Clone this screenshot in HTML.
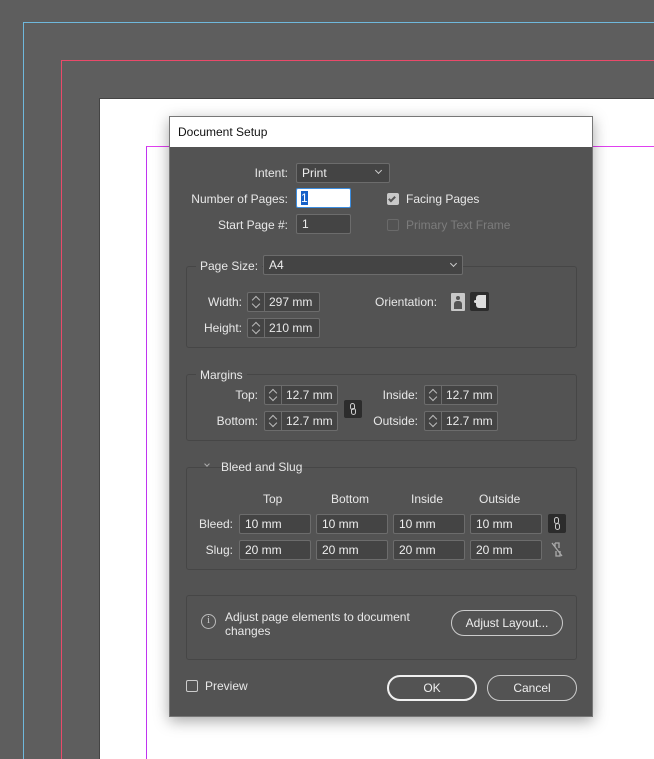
<!DOCTYPE html>
<html style="width:654px;height:759px;overflow:hidden"><head><style>
*{box-sizing:border-box;margin:0;padding:0}
body{width:654px;height:759px;background:#5e5e5e;position:relative;overflow:hidden;font-family:"Liberation Sans",sans-serif;font-size:12px;color:#e8e8e8}
.a{position:absolute}
.lbl{position:absolute;white-space:nowrap;line-height:14px}
.r{text-align:right}
.fld{position:absolute;background:#444;border:1px solid #6c6c6c;border-radius:2px;height:20px;line-height:18px;padding-left:5px;white-space:nowrap;overflow:hidden;color:#eee}
.grp{position:absolute;border:1px solid #464646;border-radius:3px}
.gl{position:absolute;background:#535353;padding:0 4px;line-height:14px}
.sp{position:absolute;height:20px;border:1px solid #6c6c6c;border-radius:2px;background:#444;display:flex}
.sp .ar{width:17px;border-right:1px solid #6c6c6c;position:relative}
.sp .ar:before,.sp .ar:after{content:"";position:absolute;left:5px;width:5px;height:5px;border-left:1px solid #bbb;border-top:1px solid #bbb}
.sp .ar:before{top:4px;transform:rotate(45deg)}
.sp .ar:after{top:8px;transform:rotate(225deg)}
.sp .v{padding-left:4px;line-height:18px;white-space:nowrap;overflow:hidden;flex:1}
.chev{position:absolute;width:6px;height:6px;border-right:1px solid #ccc;border-bottom:1px solid #ccc;transform:rotate(45deg)}
.btn{position:absolute;border:1px solid #ccc;border-radius:13px;text-align:center;color:#eee}
</style></head><body>
<div class="a" style="left:23px;top:22px;width:631px;height:737px;border-left:1px solid #6fb8dc;border-top:1px solid #6fb8dc"></div>
<div class="a" style="left:61px;top:60px;width:593px;height:699px;border-left:1px solid #ea4a6a;border-top:1px solid #ea4a6a"></div>
<div class="a" style="left:99px;top:98px;width:555px;height:661px;background:#fff;border-left:1px solid #444;border-top:1px solid #444"></div>
<div class="a" style="left:146px;top:146px;width:508px;height:613px;border-left:1px solid #c033f0;border-top:1px solid #e040f0"></div>

<div class="a" style="left:169px;top:116px;width:424px;height:601px;background:#535353;border:1px solid #777;box-shadow:0 4px 14px rgba(0,0,0,.35)">
</div>
<div class="a" style="left:170px;top:117px;width:422px;height:30px;background:#fff;color:#111;line-height:30px;padding-left:8px;font-size:12px">Document Setup</div>

<div class="lbl r" style="left:200px;top:166px;width:88px">Intent:</div>
<div class="fld" style="left:296px;top:163px;width:94px">Print</div>
<div class="chev" style="left:376px;top:168px;width:5px;height:5px"></div>
<div class="lbl r" style="left:170px;top:192px;width:118px">Number of Pages:</div>
<div class="fld" style="left:296px;top:188px;width:55px;background:#fff;border:1px solid #3d8ee0;color:#000;padding-left:4px"><span style="background:#1660c8;color:#fff">1</span></div>
<div class="lbl r" style="left:170px;top:218px;width:118px">Start Page #:</div>
<div class="fld" style="left:296px;top:214px;width:55px">1</div>
<div class="a" style="left:387px;top:193px;width:12px;height:12px;background:#c8c8c8;border-radius:2px"></div>
<div class="a" style="left:390px;top:195px;width:4px;height:7px;border-right:2px solid #555;border-bottom:2px solid #555;transform:rotate(45deg)"></div>
<div class="lbl" style="left:406px;top:192px">Facing Pages</div>
<div class="a" style="left:387px;top:219px;width:12px;height:12px;border:1px solid #6a6a6a;border-radius:2px"></div>
<div class="lbl" style="left:406px;top:218px;color:#7c7c7c">Primary Text Frame</div>

<div class="grp" style="left:186px;top:266px;width:391px;height:82px"></div>
<div class="gl" style="left:196px;top:259px">Page Size:</div>
<div class="fld" style="left:263px;top:255px;width:200px">A4</div>
<div class="chev" style="left:451px;top:261px;width:5px;height:5px"></div>
<div class="lbl r" style="left:190px;top:295px;width:52px">Width:</div>
<div class="sp" style="left:247px;top:292px;width:73px"><div class="ar"></div><div class="v">297 mm</div></div>
<div class="lbl r" style="left:190px;top:321px;width:52px">Height:</div>
<div class="sp" style="left:247px;top:318px;width:73px"><div class="ar"></div><div class="v">210 mm</div></div>
<div class="lbl" style="left:375px;top:295px">Orientation:</div>
<div class="a" style="left:451px;top:293px;width:14px;height:18px;background:#c8c8c8;border-radius:1px"></div>
<div class="a" style="left:456px;top:296px;width:4px;height:4px;background:#555;border-radius:50%"></div>
<div class="a" style="left:454px;top:301px;width:8px;height:8px;background:#555;border-radius:3px 3px 0 0"></div>
<div class="a" style="left:470px;top:292px;width:19px;height:19px;background:#2c2c2c;border-radius:2px"></div>
<div class="a" style="left:476px;top:295px;width:10px;height:13px;background:#ddd;border-radius:3px 0 0 3px"></div>
<div class="a" style="left:474px;top:300px;width:3px;height:3px;background:#ddd;border-radius:50%"></div>

<div class="grp" style="left:186px;top:374px;width:391px;height:67px"></div>
<div class="gl" style="left:196px;top:368px">Margins</div>
<div class="lbl r" style="left:200px;top:388px;width:58px">Top:</div>
<div class="sp" style="left:264px;top:385px;width:74px"><div class="ar"></div><div class="v">12.7 mm</div></div>
<div class="lbl r" style="left:200px;top:414px;width:58px">Bottom:</div>
<div class="sp" style="left:264px;top:411px;width:74px"><div class="ar"></div><div class="v">12.7 mm</div></div>
<div class="a" style="left:344px;top:400px;width:18px;height:18px;background:#2c2c2c;border-radius:2px"></div>
<div class="a" style="left:350px;top:403px;width:5px;height:7px;border:1.5px solid #ccc;border-radius:3px"></div>
<div class="a" style="left:351px;top:408px;width:5px;height:7px;border:1.5px solid #ccc;border-radius:3px"></div>
<div class="lbl r" style="left:360px;top:388px;width:58px">Inside:</div>
<div class="sp" style="left:424px;top:385px;width:74px"><div class="ar"></div><div class="v">12.7 mm</div></div>
<div class="lbl r" style="left:350px;top:414px;width:68px">Outside:</div>
<div class="sp" style="left:424px;top:411px;width:74px"><div class="ar"></div><div class="v">12.7 mm</div></div>

<div class="grp" style="left:186px;top:467px;width:391px;height:103px"></div>
<div class="gl" style="left:200px;top:460px;width:112px;padding-left:0"></div>
<div class="chev" style="left:205px;top:462px;width:4px;height:4px;border-color:#aaa"></div>
<div class="lbl" style="left:221px;top:460px">Bleed and Slug</div>
<div class="lbl" style="left:263px;top:492px">Top</div>
<div class="lbl" style="left:331px;top:492px">Bottom</div>
<div class="lbl" style="left:411px;top:492px">Inside</div>
<div class="lbl" style="left:479px;top:492px">Outside</div>
<div class="lbl r" style="left:190px;top:517px;width:43px">Bleed:</div>
<div class="lbl r" style="left:190px;top:543px;width:43px">Slug:</div>
<div class="fld" style="left:239px;top:514px;width:72px">10 mm</div>
<div class="fld" style="left:316px;top:514px;width:72px">10 mm</div>
<div class="fld" style="left:393px;top:514px;width:72px">10 mm</div>
<div class="fld" style="left:470px;top:514px;width:72px">10 mm</div>
<div class="fld" style="left:239px;top:540px;width:72px">20 mm</div>
<div class="fld" style="left:316px;top:540px;width:72px">20 mm</div>
<div class="fld" style="left:393px;top:540px;width:72px">20 mm</div>
<div class="fld" style="left:470px;top:540px;width:72px">20 mm</div>
<div class="a" style="left:548px;top:514px;width:18px;height:19px;background:#2c2c2c;border-radius:2px"></div>
<div class="a" style="left:554px;top:517px;width:5px;height:7px;border:1.5px solid #ccc;border-radius:3px"></div>
<div class="a" style="left:555px;top:523px;width:5px;height:7px;border:1.5px solid #ccc;border-radius:3px"></div>
<svg class="a" style="left:548px;top:540px" width="18" height="19"><path d="M7 3h4v5M7 3v4M8 11v5h4v-5M4 3l10 13" stroke="#aaa" stroke-width="1.3" fill="none"/></svg>

<div class="grp" style="left:186px;top:595px;width:391px;height:65px"></div>
<div class="a" style="left:201px;top:614px;width:15px;height:15px;border:1.3px solid #bbb;border-radius:50%;font-size:10px;line-height:12px;text-align:center;color:#ccc;font-family:'Liberation Serif',serif">i</div>
<div class="lbl" style="left:225px;top:610px;line-height:14px">Adjust page elements to document<br>changes</div>
<div class="btn" style="left:451px;top:610px;width:112px;height:26px;line-height:24px">Adjust Layout...</div>

<div class="a" style="left:186px;top:680px;width:12px;height:12px;border:1px solid #ccc;border-radius:2px"></div>
<div class="lbl" style="left:205px;top:679px">Preview</div>
<div class="btn" style="left:387px;top:675px;width:90px;height:26px;line-height:22px;border:2px solid #f0f0f0">OK</div>
<div class="btn" style="left:487px;top:675px;width:90px;height:26px;line-height:24px">Cancel</div>
</body></html>
